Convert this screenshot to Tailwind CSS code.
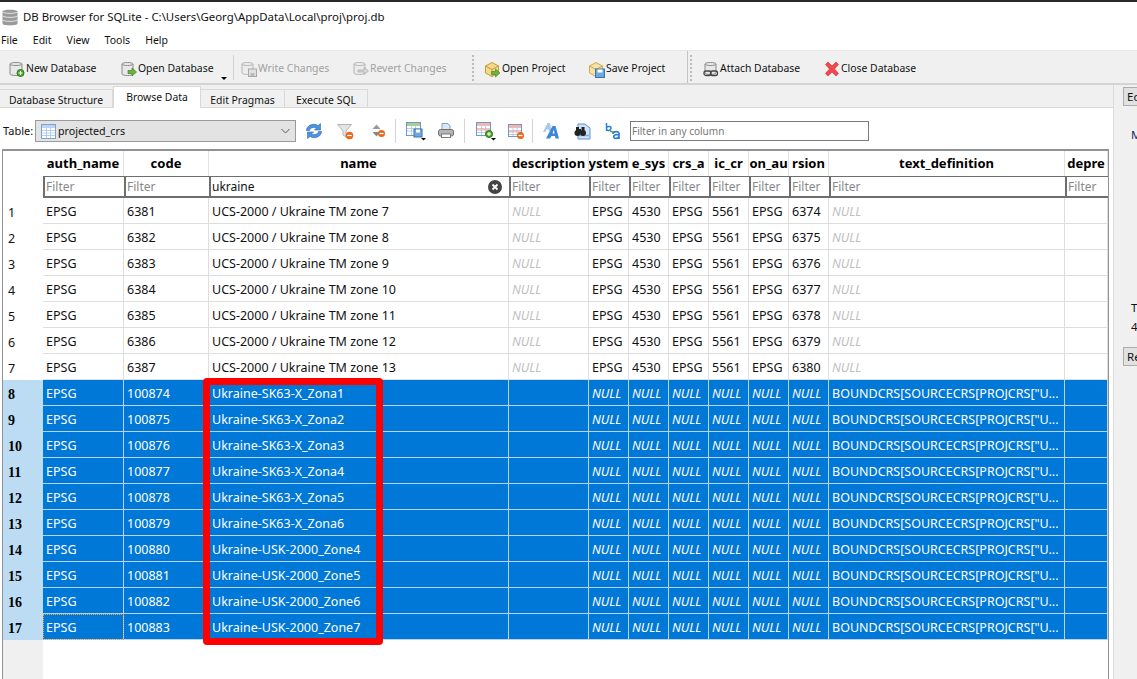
<!DOCTYPE html>
<html lang="en">
<head>
<meta charset="UTF-8" />
<title>DB Browser for SQLite</title>
<script src="https://cdn.jsdelivr.net/npm/@tailwindcss/browser@4"></script>
</head>
<body class="w-[1137px] h-[679px] overflow-hidden bg-white relative font-['Noto_Sans','Open_Sans',sans-serif] text-[10.4px] text-[#111]">
  <!-- title bar -->
  <div class="h-[2px] bg-[#2a2a2a]"></div>
  <div class="h-[30px] flex items-center pl-[2px] gap-[5px] text-[11.4px]">
    <svg width="16" height="19" viewBox="0 0 16 19"><path d="M.5 3.500C.5 1 15.500 1 15.500 3.500V15.500C15.500 18 .5 18 .5 15.500Z" fill="#9a9a9a"/><path d="M.5 3.500C.5 6 15.500 6 15.500 3.500M.5 7.500C.5 10 15.500 10 15.500 7.500M.5 11.500C.5 14 15.500 14 15.500 11.500" fill="none" stroke="#e4e4e4"/></svg>
    <span>DB Browser for SQLite - C:\Users\Georg\AppData\Local\proj\proj.db</span>
  </div>
  <!-- menu -->
  <div class="h-[18px] flex items-center pl-[1px] gap-[15px] text-[10.5px]"><span>File</span><span>Edit</span><span>View</span><span>Tools</span><span>Help</span></div>
  <!-- toolbar -->
  <div class="h-[35px] bg-[#f0f0f0] border-t border-[#e6e6e6] border-b-2 border-b-[#d4d4d4] flex items-center">
    <div class="flex items-center w-[233px] h-full pl-[9px] pt-[4px] relative">
      <span class="flex items-center gap-px w-[112px]"><svg width="16" height="16" viewBox="0 0 16 16"><path d="M1 3C1 1 13 1 13 3V13C13 15 1 15 1 13Z" fill="#e8e8e8" stroke="#8a8a8a"/><path d="M1 3C1 5 13 5 13 3" fill="none" stroke="#8a8a8a"/><circle cx="11.500" cy="12" r="3.500" fill="#4ea72e" stroke="#2d7a16"/><path d="M9.500 12H13.500M11.500 10V14" stroke="#fff"/></svg>New Database</span>
      <span class="flex items-center gap-px"><svg width="16" height="16" viewBox="0 0 16 16"><path d="M1 3C1 1 12 1 12 3V13C12 15 1 15 1 13Z" fill="#e8e8e8" stroke="#8a8a8a"/><path d="M1 3C1 5 12 5 12 3" fill="none" stroke="#8a8a8a"/><path d="M7 9.500H11V7L15.500 11L11 15V12.500H7Z" fill="#6cb33f" stroke="#3f7f1f" stroke-width=".7"/></svg>Open Database</span>
      <span class="absolute left-[221px] top-[26px] border-x-[3px] border-x-transparent border-t-[3px] border-t-black"></span>
    </div>
    <div class="w-px h-[25px] bg-[#d0d0d0]"></div>
    <div class="flex items-center h-full pl-[7px] pt-[4px] w-[241px] text-[#a0a0a0] relative">
      <span class="flex items-center gap-px w-[112px]"><svg width="16" height="16" viewBox="0 0 16 16"><path d="M1 3C1 1 12 1 12 3V12C12 14 1 14 1 12Z" fill="#ececec" stroke="#b5b5b5"/><path d="M1 3C1 5 12 5 12 3" fill="none" stroke="#b5b5b5"/><rect x="7.500" y="8" width="8" height="7.500" fill="#e0e0e0" stroke="#a8a8a8"/><rect x="9.500" y="12" width="4" height="3" fill="#bbb"/></svg>Write Changes</span>
      <span class="flex items-center gap-px"><svg width="16" height="16" viewBox="0 0 16 16"><path d="M1 3C1 1 12 1 12 3V12C12 14 1 14 1 12Z" fill="#ececec" stroke="#b5b5b5"/><path d="M1 3C1 5 12 5 12 3" fill="none" stroke="#b5b5b5"/><path d="M5 9H11V6.500L15.500 10L11 13.500V11H5Z" fill="#d6d6d6" stroke="#a8a8a8" stroke-width=".7"/></svg>Revert Changes</span>
      <span class="absolute right-0 top-[4px] h-[26px] w-[3px] border-l-2 border-dotted border-[#bcbcbc]"></span>
    </div>
    <div class="flex items-center h-full pl-[9px] pt-[4px] w-[213px] relative">
      <span class="flex items-center gap-px w-[104px]"><svg width="17" height="17" viewBox="0 0 17 17"><path d="M1.500 5L8 1.500L14.500 5V12L8 15.500L1.500 12Z" fill="#f3d98b" stroke="#c99a35"/><path d="M1.500 5L8 8.500L14.500 5M8 8.500V15.500" fill="none" stroke="#c99a35"/><path d="M7.500 10.500H11.500V8L16 12L11.500 16V13.500H7.500Z" fill="#6cb33f" stroke="#3f7f1f" stroke-width=".6"/></svg>Open Project</span>
      <span class="flex items-center gap-px"><svg width="17" height="17" viewBox="0 0 17 17"><path d="M1.500 5L8 1.500L14.500 5V12L8 15.500L1.500 12Z" fill="#f5e2a6" stroke="#d0a850"/><path d="M1.500 5L8 8.500L14.500 5M8 8.500V15.500" fill="none" stroke="#d0a850"/><rect x="7.500" y="8" width="9" height="8.500" fill="#6fa8dc" stroke="#3b74ad"/><rect x="9.500" y="8.500" width="5" height="3" fill="#fff"/></svg>Save Project</span>
      <span class="absolute right-0 top-0 h-full w-px bg-[#c4c4c4]"></span>
    </div>
    <div class="flex items-center h-full pl-[15px] pt-[4px] relative">
      <span class="absolute left-[2px] top-[4px] h-[26px] w-[3px] border-l-2 border-dotted border-[#bcbcbc]"></span>
      <span class="flex items-center gap-px w-[121px]"><svg width="16" height="16" viewBox="0 0 16 16"><path d="M2 3C2 1 13 1 13 3V12C13 14 2 14 2 12Z" fill="#e8e8e8" stroke="#8a8a8a"/><path d="M2 3C2 5 13 5 13 3" fill="none" stroke="#8a8a8a"/><rect x="1" y="10" width="7" height="4.500" rx="2" fill="none" stroke="#444" stroke-width="1.300"/><rect x="7.500" y="10" width="7" height="4.500" rx="2" fill="none" stroke="#444" stroke-width="1.300"/></svg>Attach Database</span>
      <span class="flex items-center gap-px"><svg width="16" height="16" viewBox="0 0 16 16"><path d="M1.500 3.500L4 1L8 5L12 1L14.500 3.500L10.500 8L14.500 12.500L12 15L8 11L4 15L1.500 12.500L5.500 8Z" fill="#f0484e" stroke="#d92a30" stroke-width=".6"/></svg>Close Database</span>
    </div>
  </div>
  <div class="flex h-[594px]">
    <!-- main tabs -->
    <div class="w-[1114px] h-full flex flex-col border-r border-[#dcdcdc]">
      <div class="h-[23px] shrink-0 bg-[#f0f0f0] flex items-end border-b border-[#d8d8d8]">
        <div class="h-[19px] w-[113px] flex items-center justify-center border-r border-t border-[#d9d9d9] mb-[-1px] pt-[3px]">Database Structure</div>
        <div class="h-[22px] w-[88px] flex items-center justify-center bg-white border-x border-t border-[#d9d9d9] mb-[-1px] pt-[1px] z-10">Browse Data</div>
        <div class="h-[19px] w-[84px] flex items-center justify-center border-r border-t border-[#d9d9d9] mb-[-1px] pt-[3px]">Edit Pragmas</div>
        <div class="h-[19px] w-[83px] flex items-center justify-center border-r border-t border-[#d9d9d9] mb-[-1px] pt-[3px]">Execute SQL</div>
      </div>
      <div class="h-[41px] shrink-0 flex items-center pl-[3px] pt-[5px]">
        <span class="w-[32px] text-[11px]">Table:</span>
        <div class="w-[261px] h-[22px] bg-[#e3e3e3] border border-[#9a9a9a] flex items-center pl-[5px] text-[10.7px]">
          <svg width="15" height="15" viewBox="0 0 15 15"><rect x=".5" y=".5" width="14" height="14" fill="#fff" stroke="#7aa3d4"/><rect x="1" y="1" width="13" height="3" fill="#bcd4ef"/><path d="M1 6.500H14M1 9H14M1 11.500H14M5.500 4V14M9.500 4V14" stroke="#9cbde3" stroke-width=".7"/></svg>
          <span class="ml-[2px]">projected_crs</span>
          <svg class="ml-auto mr-[5px]" width="9" height="6" viewBox="0 0 9 6"><path d="M.5 1L4.500 5L8.500 1" fill="none" stroke="#555"/></svg>
        </div>
        <!-- refresh -->
        <svg class="ml-[10px]" width="16" height="16" viewBox="0 0 16 16"><path d="M.5 7.500C.5 2.500 7 -.5 12 2.500L14.500 .5V7H8.500L10.500 5C7.500 3.500 4 5 3.500 7.500Z" fill="#4f93dd" stroke="#2a6bb5" stroke-width=".6"/><path d="M15.500 8.500C15.500 13.500 9 16.500 4 13.500L1.500 15.500V9H7.500L5.500 11C8.500 12.500 12 11 12.500 8.500Z" fill="#4f93dd" stroke="#2a6bb5" stroke-width=".6"/></svg>
        <!-- clear filter -->
        <svg class="ml-[15px]" width="17" height="17" viewBox="0 0 17 17"><path d="M.5 1.500H14.500L9 8V14L6 12V8Z" fill="#e4e4e4" stroke="#b4b4b4"/><circle cx="12.500" cy="12.500" r="3.800" fill="#e8651c"/><path d="M10.300 12.500H14.700" stroke="#fff" stroke-width="1.300"/></svg>
        <!-- clear sort -->
        <svg class="ml-[17px]" width="15" height="16" viewBox="0 0 15 16"><path d="M1.500 6L5.500 1.500L9.500 6Z" fill="#9a9a9a"/><path d="M1.500 9L5.500 13.500L9.500 9Z" fill="#8a8a8a"/><circle cx="10.500" cy="10.500" r="3.500" fill="#e8651c"/><path d="M8.500 10.500H12.500" stroke="#fff" stroke-width="1.300"/></svg>
        <div class="ml-[9px] w-px h-[24px] bg-[#d4d4d4]"></div>
        <!-- export -->
        <svg class="ml-[10px]" width="20" height="20" viewBox="0 0 20 20"><rect x=".5" y="1.500" width="14" height="13" fill="#fff" stroke="#6f97c9"/><rect x="1" y="2" width="13" height="3" fill="#a9d08e"/><path d="M1 7.500H14M1 10H14M5.500 5V14M9.500 5V14" stroke="#9cbde3" stroke-width=".7"/><rect x="8" y="8" width="8" height="8" fill="#6fa8dc" stroke="#3b74ad"/><rect x="10" y="8.500" width="4" height="3" fill="#fff"/><path d="M15 17H20L17.500 19.500Z" fill="#000"/></svg>
        <!-- print -->
        <svg class="ml-[11px]" width="18" height="18" viewBox="0 0 18 18"><path d="M5 1.500H11L13 4V8H5Z" fill="#dbe8f7" stroke="#7d9fc9"/><rect x="1.500" y="7.500" width="15" height="6.500" rx="2" fill="#b5b5b5" stroke="#6e6e6e"/><rect x="4.500" y="12" width="9" height="3.500" fill="#fff" stroke="#7a7a7a"/></svg>
        <div class="ml-[9px] w-px h-[24px] bg-[#d4d4d4]"></div>
        <!-- add record -->
        <svg class="ml-[11px]" width="20" height="20" viewBox="0 0 20 20"><rect x=".5" y="1.500" width="14" height="13" fill="#fff" stroke="#6f97c9"/><rect x="1" y="2" width="13" height="3" fill="#f2b8b0"/><rect x="1" y="7" width="13" height="2.500" fill="#f5c0b8"/><path d="M1 11.500H14M5.500 5V14M9.500 5V14" stroke="#9cbde3" stroke-width=".7"/><circle cx="13" cy="13" r="3.500" fill="#4ea72e" stroke="#2d7a16"/><path d="M11 13H15M13 11V15" stroke="#fff"/><path d="M15 17H20L17.500 19.500Z" fill="#000"/></svg>
        <!-- delete record -->
        <svg class="ml-[12px]" width="17" height="17" viewBox="0 0 17 17"><rect x=".5" y="1.500" width="13" height="12" fill="#fff" stroke="#6f97c9"/><rect x="1" y="2" width="12" height="3" fill="#f2b8b0"/><rect x="1" y="7" width="12" height="2.500" fill="#f5c0b8"/><path d="M1 11.500H13M5 5V13M9 5V13" stroke="#9cbde3" stroke-width=".7"/><circle cx="12.500" cy="12.500" r="3.500" fill="#e8651c"/><path d="M10.500 12.500H14.500" stroke="#fff" stroke-width="1.300"/></svg>
        <div class="ml-[7px] w-px h-[24px] bg-[#d4d4d4]"></div>
        <!-- font / find / replace -->
        <svg class="ml-[10px]" width="17" height="16" viewBox="0 0 17 16"><path d="M0 9L4.500 0H7L8.500 8H6L5.700 6.500H3.500L2.500 9Z" fill="#a9c8ec"/><path d="M3 15.500L9.500 3H12.500L16 15.500H12.500L12 13H8.500L7 15.500ZM9.500 10.500H11.500L11 6.500Z" fill="#3f86d8" fill-rule="evenodd"/></svg>
        <svg class="ml-[14px]" width="17" height="17" viewBox="0 0 17 17"><path d="M4 1H11L16 5V16H4Z" fill="#cfe2f7" stroke="#5d93d0"/><path d="M5 12.500H15" stroke="#7fb0e4" stroke-width="1.500"/><circle cx="3.500" cy="10" r="3" fill="#222"/><circle cx="9" cy="10" r="3" fill="#222"/><rect x="2" y="4" width="3" height="5" fill="#222"/><rect x="7.500" y="4" width="3" height="5" fill="#222"/><rect x="5" y="6" width="2" height="3" fill="#222"/></svg>
        <svg class="ml-[14px]" width="17" height="17" viewBox="0 0 17 17"><path d="M1.500 0V8M1.500 4.500C3 2.500 6.500 3.500 6 5.500C5.500 8 2.500 8 1.500 6.500" fill="none" stroke="#2f7ed8" stroke-width="1.500"/><path d="M8 11C8 8 14 8 14 10.500V16M14 12C10 11 8 12.500 9 14.500C10 16 13 15.500 14 13.500" fill="none" stroke="#2f7ed8" stroke-width="1.700"/><path d="M5 8L9 9.500" stroke="#4ea72e" stroke-width="1.400"/></svg>
        <div class="ml-[8px] w-[239px] h-[20px] border border-[#7a7a7a] flex items-center pl-[1px] text-[#777] text-[10px]">Filter in any column</div>
      </div>
      <!-- table -->
      <div id="tbl" class="ml-[2px] w-[1107px] flex-1 border-t-2 border-x border-x-[#8f9399] border-t-[#8f9399] relative overflow-hidden text-[12.5px]"></div>
    </div>
    <!-- edit dock cut off by the window -->
    <div class="flex-1 bg-[#f0f0f0] relative overflow-hidden text-[11.5px]">
      <div class="absolute left-[9px] top-[2px] w-[30px] h-[19px] bg-[#e1e1e1] border border-[#adadad] pl-[3px]">Ed</div>
      <span class="absolute left-[17px] top-[41px] text-[#1a2b6b]">M</span>
      <span class="absolute left-[17px] top-[214px]">T</span>
      <span class="absolute left-[17px] top-[233px]">4</span>
      <div class="absolute left-[9px] top-[262px] w-[30px] h-[19px] bg-[#e1e1e1] border border-[#adadad] pl-[3px]">Re</div>
    </div>
  </div>
  <!-- red highlight drawn over the table -->
  <div class="absolute left-[203px] top-[378px] w-[180px] h-[267px] border-[7px] border-[#ff0000] rounded-[4px]"></div>
  <script>
    // 列寬與資料
    const cols = [40, 81, 85, 300, 80, 40, 40, 40, 40, 40, 40, 236, 43];
    const gridTpl = cols.map((c) => c + "px").join(" ");
    const heads = ["", "auth_name", "code", "name", "description", "ystem", "e_sys", "crs_a", "ic_cr", "on_au", "rsion", "text_definition", "depre"];
    const tbl = document.getElementById("tbl");

    const grid = (cls) => {
      const g = document.createElement("div");
      g.className = "grid " + cls;
      g.style.gridTemplateColumns = gridTpl;
      tbl.appendChild(g);
      return g;
    };
    const cell = (parent, cls, text) => {
      const d = document.createElement("div");
      d.className = cls;
      d.textContent = text;
      parent.appendChild(d);
      return d;
    };

    const hr = grid("h-[25px]");
    heads.forEach((h, i) => {
      cell(hr, "flex items-center justify-center overflow-hidden whitespace-nowrap font-bold text-[13px] text-black " + (i ? "border-r border-[#e2e2e2]" : "bg-white"), h);
    });

    const fr = grid("h-[22px] relative");
    heads.forEach((h, i) => {
      if (!i) return void cell(fr, "", "");
      const isName = h === "name";
      const f = cell(fr, "border-2 border-[#6e6e6e] border-l-[2px] border-r-0 border-t-[1px] flex items-center pl-[1px] " + (isName ? "text-[#111] text-[12px]" : "text-[#888] text-[12px]"), isName ? "ukraine" : "Filter");
      if (isName) {
        f.insertAdjacentHTML("beforeend", '<svg class="ml-auto mr-[7px]" width="14" height="14" viewBox="0 0 14 14"><circle cx="7" cy="7" r="7" fill="#444"/><path d="M4.500 4.500L9.500 9.500M9.500 4.500L4.500 9.500" stroke="#fff" stroke-width="1.800"/></svg>');
      }
    });

    const plain = [[6381, "UCS-2000 / Ukraine TM zone 7", 6374], [6382, "UCS-2000 / Ukraine TM zone 8", 6375], [6383, "UCS-2000 / Ukraine TM zone 9", 6376], [6384, "UCS-2000 / Ukraine TM zone 10", 6377], [6385, "UCS-2000 / Ukraine TM zone 11", 6378], [6386, "UCS-2000 / Ukraine TM zone 12", 6379], [6387, "UCS-2000 / Ukraine TM zone 13", 6380]];
    const sel = [[100874, "Ukraine-SK63-X_Zona1"], [100875, "Ukraine-SK63-X_Zona2"], [100876, "Ukraine-SK63-X_Zona3"], [100877, "Ukraine-SK63-X_Zona4"], [100878, "Ukraine-SK63-X_Zona5"], [100879, "Ukraine-SK63-X_Zona6"], [100880, "Ukraine-USK-2000_Zone4"], [100881, "Ukraine-USK-2000_Zone5"], [100882, "Ukraine-USK-2000_Zone6"], [100883, "Ukraine-USK-2000_Zone7"]];

    plain.forEach((r, n) => {
      const row = grid("h-[26px]");
      cell(row, "flex items-center pl-[5px] pt-[4px]", String(n + 1));
      ["EPSG", r[0], r[1], "NULL", "EPSG", "4530", "EPSG", "5561", "EPSG", r[2], "NULL", ""].forEach((v) => {
        const isNull = v === "NULL";
        cell(row, "flex items-center pl-[3px] pt-[3px] overflow-hidden whitespace-nowrap border-r border-b border-[#dedede] " + (isNull ? "italic text-[#c0c0c0]" : ""), v);
      });
    });
    sel.forEach((r, n) => {
      const row = grid("h-[26px]");
      cell(row, "flex items-center pl-[5px] pt-[2px] font-bold text-black bg-[#bcdcf4] font-['Liberation_Serif',serif] text-[14px]", String(n + 8));
      ["EPSG", r[0], r[1], "", "NULL", "NULL", "NULL", "NULL", "NULL", "NULL", 'BOUNDCRS[SOURCECRS[PROJCRS["U...', ""].forEach((v, i) => {
        const isNull = v === "NULL";
        const focus = n === 9 && i === 0;
        cell(row, "flex items-center pl-[3px] pt-[3px] overflow-hidden whitespace-nowrap bg-[#0078d7] text-white border-r border-b border-[#b8d3ee] " + (isNull ? "italic " : "") + (focus ? "outline-1 outline-dotted outline-offset-[-1px] outline-[#f0a040]" : ""), v);
      });
    });
    // 列標題欄的灰底延伸到底
    const rest = document.createElement("div");
    rest.className = "w-[40px] h-[60px] bg-[#f0f0f0]";
    tbl.appendChild(rest);
  </script>
</body>
</html>
